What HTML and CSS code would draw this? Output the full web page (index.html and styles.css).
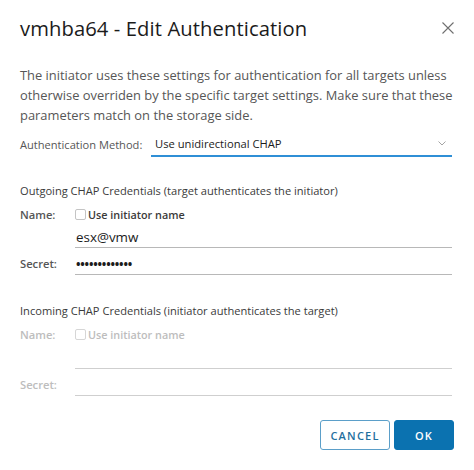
FILE: index.html
```html
<!DOCTYPE html>
<html>
<head>
<meta charset="utf-8">
<link rel="stylesheet" href="styles.css">
</head>
<body>
<div class="modal">
  <header class="modal-header">
    <h1 class="modal-title">vmhba64 - Edit Authentication</h1>
    <button class="close-btn" aria-label="Close">
      <svg width="12" height="12" viewBox="0 0 12 12"><path d="M0.5 0.5 L11.5 11.5 M11.5 0.5 L0.5 11.5" stroke="#6f6f6f" stroke-width="1.1" fill="none"/></svg>
    </button>
  </header>
  <p class="intro">The initiator uses these settings for authentication for all targets unless<br>otherwise overriden by the specific target settings. Make sure that these<br>parameters match on the storage side.</p>

  <div class="method-row">
    <span class="method-label">Authentication Method:</span>
    <div class="select">
      <span>Use unidirectional CHAP</span>
      <svg class="chevron" width="8" height="5" viewBox="0 0 8 5"><path d="M0.5 0.5 L4 4 L7.5 0.5" stroke="#9a9a9a" stroke-width="0.9" fill="none"/></svg>
    </div>
  </div>

  <div class="section-title first">Outgoing CHAP Credentials (target authenticates the initiator)</div>
  <div class="check-row">
    <span class="field-label">Name:</span>
    <label class="check"><span class="box"></span>Use initiator name</label>
  </div>
  <div class="input-row">
    <span class="field-label"></span>
    <div class="input">esx@vmw</div>
  </div>
  <div class="input-row secret">
    <span class="field-label">Secret:</span>
    <div class="input dots">•••••••••••••</div>
  </div>

  <div class="section-title second">Incoming CHAP Credentials (initiator authenticates the target)</div>
  <div class="check-row disabled">
    <span class="field-label">Name:</span>
    <label class="check"><span class="box"></span>Use initiator name</label>
  </div>
  <div class="input-row disabled">
    <span class="field-label"></span>
    <div class="input"></div>
  </div>
  <div class="input-row secret disabled">
    <span class="field-label">Secret:</span>
    <div class="input"></div>
  </div>

  <footer class="modal-footer">
    <button class="btn btn-outline">CANCEL</button>
    <button class="btn btn-primary">OK</button>
  </footer>
</div>
</body>
</html>
```

FILE: styles.css
```css
* { box-sizing: border-box; }
html, body { margin: 0; padding: 0; background: #fff; }
body {
  font-family: "Open Sans", "Noto Sans", sans-serif;
  color: #565656;
  width: 474px;
}
.modal { padding: 0 22px 0 20px; }

.modal-header {
  height: 56px;
  display: flex;
  align-items: center;
  justify-content: space-between;
}
.modal-title {
  margin: 0;
  font-size: 20.2px;
  font-weight: 400;
  color: #1b1b1b;
  letter-spacing: 0.1px;
}
.close-btn {
  border: 0;
  background: none;
  padding: 0;
  margin-right: -2px;
  width: 12px;
  height: 12px;
  display: flex;
}

.intro {
  margin: 9px 0 0;
  font-size: 12.9px;
  line-height: 20px;
  color: #565656;
  white-space: nowrap;
}

.method-row {
  margin-top: 8px;
  display: flex;
  align-items: flex-end;
  height: 24px;
  font-size: 11.1px;
}
.method-label {
  flex: 0 0 131px;
  white-space: nowrap;
  padding-bottom: 5px;
  color: #565656;
}
.select {
  flex: 1;
  height: 24px;
  border-bottom: 2px solid #2f8fd6;
  display: flex;
  align-items: center;
  justify-content: space-between;
  padding: 0 6px 2px 4px;
  color: #1b1b1b;
  font-size: 11.2px;
}
.chevron { margin-top: 1px; }

.section-title {
  font-size: 11.1px;
  line-height: 20px;
  color: #3a3a3a;
}
.section-title.first { margin-top: 24px; }
.section-title.second { margin-top: 26px; }

.check-row, .input-row {
  display: grid;
  grid-template-columns: 55px 1fr;
  font-size: 11.2px;
}
.check-row { margin-top: 3px; height: 20px; align-items: center; }
.field-label { font-weight: 600; color: #565656; }
.check {
  display: flex;
  align-items: center;
  font-weight: 600;
  color: #3a3a3a;
  font-size: 10.8px;
}
.box {
  width: 11px;
  height: 11px;
  border: 1px solid #c4c4c4;
  border-radius: 2px;
  margin-right: 2px;
}

.input-row { align-items: end; }
.input-row .field-label { padding-bottom: 4px; }
.input {
  height: 24px;
  padding: 4px 0 0 1px;
  line-height: 19px;
  border-bottom: 1px solid #b8b8b8;
  color: #1b1b1b;
  font-size: 13.4px;
}
.input-row.secret { margin-top: 2px; }
.input-row.secret .input { height: 25px; padding-top: 5px; }
.input.dots { font-size: 12px; letter-spacing: -0.2px; font-weight: 700; }

.disabled .field-label,
.disabled .check { color: #bdbdbd; }
.disabled .box { border-color: #d6d6d6; }
.disabled .input { border-bottom-color: #cfcfcf; }
.input-row.disabled:not(.secret) .input { height: 25px; }

.modal-footer {
  margin-top: 24px;
  margin-right: -2px;
  display: flex;
  justify-content: flex-end;
  gap: 4px;
}
.btn {
  height: 30px;
  border-radius: 3px;
  font-family: "Open Sans", "Noto Sans", sans-serif;
  font-size: 11px;
  font-weight: 600;
  letter-spacing: 1.2px;
  padding: 0;
}
.btn-outline {
  width: 70px;
  background: #fff;
  border: 1px solid #5b9fc9;
  color: #1f6f9e;
}
.btn-primary {
  width: 60px;
  background: #0b72b0;
  border: 1px solid #0b72b0;
  color: #fff;
}
```
